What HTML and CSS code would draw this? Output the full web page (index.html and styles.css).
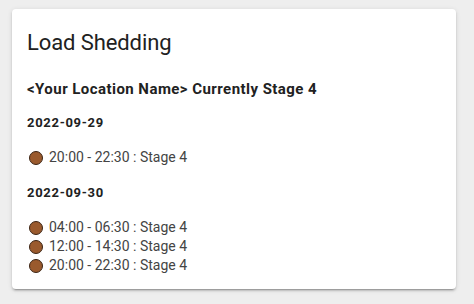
FILE: index.html
```html
<!DOCTYPE html>
<html>
<head>
<meta charset="utf-8">
<link rel="stylesheet" href="styles.css">
</head>
<body>
<div class="card">
  <h1 class="title">Load Shedding</h1>
  <div class="content">
    <div class="status">&lt;Your Location Name&gt; Currently Stage 4</div>
    <div class="day">
      <div class="date">2022-09-29</div>
      <ul class="slots">
        <li class="slot"><span class="dot"></span>20:00 - 22:30 : Stage 4</li>
      </ul>
    </div>
    <div class="day">
      <div class="date">2022-09-30</div>
      <ul class="slots">
        <li class="slot"><span class="dot"></span>04:00 - 06:30 : Stage 4</li>
        <li class="slot"><span class="dot"></span>12:00 - 14:30 : Stage 4</li>
        <li class="slot"><span class="dot"></span>20:00 - 22:30 : Stage 4</li>
      </ul>
    </div>
  </div>
</div>
</body>
</html>
```
FILE: styles.css
```css
html, body {
  margin: 0;
  padding: 0;
}
body {
  background: #eeeeee;
  font-family: Roboto, "Noto Sans", sans-serif;
  padding: 9px 18px 14px 12px;
}
.card {
  background: #fff;
  border-radius: 4px;
  box-shadow: 0 2px 2px 0 rgba(0,0,0,0.14), 0 1px 5px 0 rgba(0,0,0,0.12), 0 3px 1px -2px rgba(0,0,0,0.2);
  height: 280px;
  box-sizing: border-box;
  padding: 0 15px;
}
.title {
  margin: 0;
  font-size: 22px;
  font-weight: 400;
  color: #212121;
  line-height: 28px;
  padding: 20px 0 0 0;
  letter-spacing: -0.1px;
}
.content {
  color: #212121;
}
.status {
  font-weight: 700;
  font-size: 15px;
  letter-spacing: 0.45px;
  line-height: 20px;
  margin-top: 22px;
  color: #212121;
}
.date {
  font-weight: 700;
  font-size: 13px;
  letter-spacing: 0.7px;
  line-height: 18px;
  margin-top: 15px;
  color: #212121;
}
.day + .day .date {
  margin-top: 17px;
}
.slots {
  list-style: none;
  margin: 16px 0 0 0;
  padding: 0;
}
.slot {
  display: flex;
  align-items: center;
  font-size: 14px;
  line-height: 19px;
  height: 19px;
  color: #444444;
}
.dot {
  width: 12px;
  height: 12px;
  border-radius: 50%;
  background: #9a5a2d;
  border: 1px solid #3b2414;
  margin: 0 6px 0 2px;
  flex: none;
}
```
